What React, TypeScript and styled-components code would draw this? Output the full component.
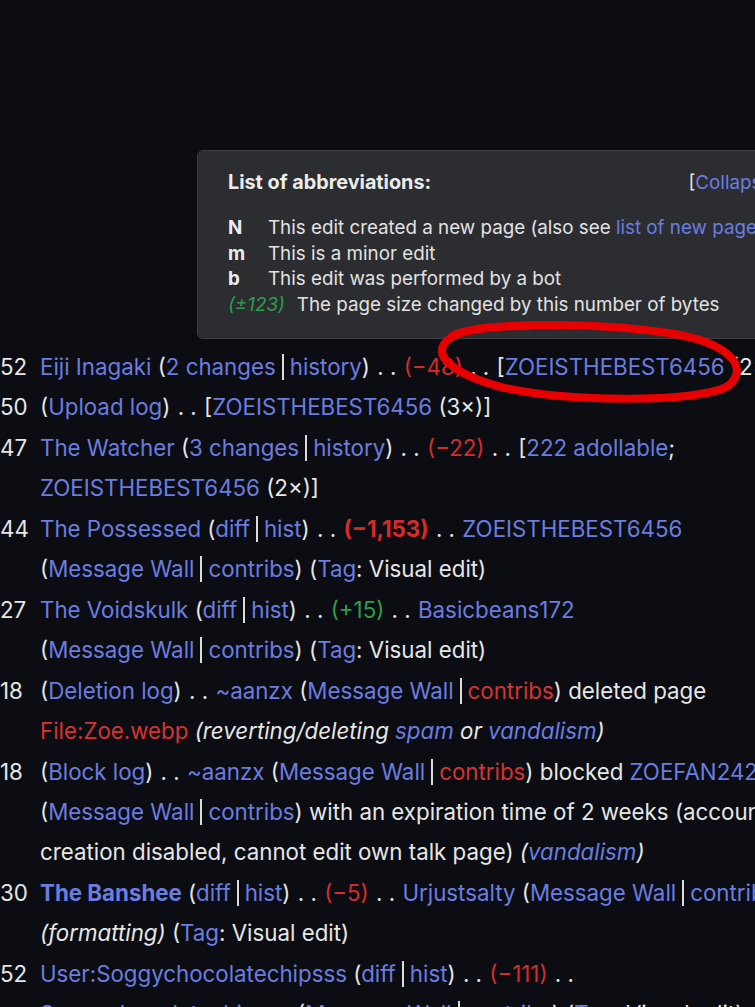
import React from "react";
import styled, { createGlobalStyle } from "styled-components";

const GlobalStyle = createGlobalStyle`
  html, body { margin: 0; padding: 0; background: #0b0d12; overflow: hidden; }
  body { font-family: Inter, "Noto Sans", "DejaVu Sans", sans-serif; color: #e6e6e6; }
  #root { width: 755px; height: 1007px; overflow: hidden; }
`;

const Page = styled.div`
  position: relative;
  width: 755px;
  height: 1007px;
  overflow: hidden;
  padding-top: 150px;
  box-sizing: border-box;
`;

const Legend = styled.div`
  margin-left: 197px;
  width: 613px;
  box-sizing: border-box;
  background: #2b2d31;
  border: 1px solid #3c3e43;
  border-radius: 6px;
  padding: 19px 30px 21px 30px;
  font-size: 18.8px;
`;

const LegendHead = styled.div`
  display: flex;
  justify-content: space-between;
  align-items: baseline;
  line-height: 24px;
  margin-bottom: 20px;
`;

const LegendTitle = styled.span`
  font-weight: 700;
  font-size: 19.8px;
  color: #ececec;
`;

const DefList = styled.dl`
  margin: 0;
  display: flex;
  flex-direction: column;
`;

const DefRow = styled.div`
  display: flex;
  gap: 12px;
  line-height: 25.5px;
  white-space: nowrap;
`;

const Term = styled.dt<{ $size?: boolean }>`
  min-width: 28px;
  font-weight: ${(p) => (p.$size ? 400 : 700)};
  font-style: ${(p) => (p.$size ? "italic" : "normal")};
  color: ${(p) => (p.$size ? "#2d9d4b" : "#ececec")};
`;

const Desc = styled.dd`
  margin: 0;
  color: #e2e2e2;
`;

const Link = styled.a<{ $red?: boolean; $bold?: boolean }>`
  color: ${(p) => (p.$red ? "#d63333" : "#6b7de0")};
  font-weight: ${(p) => (p.$bold ? 700 : 400)};
  text-decoration: none;
`;

const List = styled.ul`
  list-style: none;
  margin: 8px 0 0 0;
  padding: 0;
`;

const Entry = styled.li`
  display: grid;
  grid-template-columns: 40px auto;
  font-size: 22.3px;
  line-height: 40.45px;
  white-space: nowrap;
  color: #e6e6e6;
`;

const Time = styled.span`
  color: #e6e6e6;
`;

const Body = styled.span``;

const Pipe = styled.span`
  display: inline-block;
  width: 2px;
  height: 26px;
  background: #dcdcdc;
  vertical-align: -5px;
  margin: 0 6px 0 6px;
`;

const Size = styled.span<{ $tone: "neg" | "pos"; $big?: boolean }>`
  color: ${(p) => (p.$tone === "neg" ? "#d62b2b" : "#2d9d4b")};
  font-weight: ${(p) => (p.$big ? 700 : 400)};
`;

const Sep = styled.span`
  margin: 0 1px;
`;

const Comment = styled.span`
  font-style: italic;
`;

const Overlay = styled.svg`
  position: absolute;
  left: 0;
  top: 0;
  pointer-events: none;
`;

const Dots = () => <Sep>. .</Sep>;
const P = () => <Pipe />;

const Wall = ({ redContribs }: { redContribs?: boolean }) => (
  <>
    (<Link>Message Wall</Link>
    <P />
    <Link $red={redContribs}>contribs</Link>)
  </>
);

export default function App() {
  return (
    <Page>
      <GlobalStyle />
      <Legend>
        <LegendHead>
          <LegendTitle>List of abbreviations:</LegendTitle>
          <span>
            [<Link>Collapse</Link>]
          </span>
        </LegendHead>
        <DefList>
          <DefRow>
            <Term>N</Term>
            <Desc>
              This edit created a new page (also see <Link>list of new pages</Link>)
            </Desc>
          </DefRow>
          <DefRow>
            <Term>m</Term>
            <Desc>This is a minor edit</Desc>
          </DefRow>
          <DefRow>
            <Term>b</Term>
            <Desc>This edit was performed by a bot</Desc>
          </DefRow>
          <DefRow>
            <Term $size>(±123)</Term>
            <Desc>The page size changed by this number of bytes</Desc>
          </DefRow>
        </DefList>
      </Legend>

      <List>
        <Entry>
          <Time>52</Time>
          <Body>
            <Link>Eiji Inagaki</Link> (<Link>2 changes</Link>
            <P />
            <Link>history</Link>) <Dots /> <Size $tone="neg">(−48)</Size> <Dots /> [
            <Link>ZOEISTHEBEST6456</Link> (2×)]
          </Body>
        </Entry>
        <Entry>
          <Time>50</Time>
          <Body>
            (<Link>Upload log</Link>) <Dots /> [<Link>ZOEISTHEBEST6456</Link> (3×)]
          </Body>
        </Entry>
        <Entry>
          <Time>47</Time>
          <Body>
            <Link>The Watcher</Link> (<Link>3 changes</Link>
            <P />
            <Link>history</Link>) <Dots /> <Size $tone="neg">(−22)</Size> <Dots /> [
            <Link>222 adollable</Link>;
            <br />
            <Link>ZOEISTHEBEST6456</Link> (2×)]
          </Body>
        </Entry>
        <Entry>
          <Time>44</Time>
          <Body>
            <Link>The Possessed</Link> (<Link>diff</Link>
            <P />
            <Link>hist</Link>) <Dots />{" "}
            <Size $tone="neg" $big>
              (−1,153)
            </Size>{" "}
            <Dots /> <Link>ZOEISTHEBEST6456</Link>
            <br />
            <Wall /> (<Link>Tag</Link>: Visual edit)
          </Body>
        </Entry>
        <Entry>
          <Time>27</Time>
          <Body>
            <Link>The Voidskulk</Link> (<Link>diff</Link>
            <P />
            <Link>hist</Link>) <Dots /> <Size $tone="pos">(+15)</Size> <Dots />{" "}
            <Link>Basicbeans172</Link>
            <br />
            <Wall /> (<Link>Tag</Link>: Visual edit)
          </Body>
        </Entry>
        <Entry>
          <Time>18</Time>
          <Body>
            (<Link>Deletion log</Link>) <Dots /> <Link>~aanzx</Link> <Wall redContribs /> deleted page
            <br />
            <Link $red>File:Zoe.webp</Link>{" "}
            <Comment>
              (reverting/deleting <Link>spam</Link> or <Link>vandalism</Link>)
            </Comment>
          </Body>
        </Entry>
        <Entry>
          <Time>18</Time>
          <Body>
            (<Link>Block log</Link>) <Dots /> <Link>~aanzx</Link> <Wall redContribs /> blocked{" "}
            <Link>ZOEFAN2423</Link>
            <br />
            <Wall /> with an expiration time of 2 weeks (account
            <br />
            creation disabled, cannot edit own talk page){" "}
            <Comment>
              (<Link>vandalism</Link>)
            </Comment>
          </Body>
        </Entry>
        <Entry>
          <Time>30</Time>
          <Body>
            <Link $bold>The Banshee</Link> (<Link>diff</Link>
            <P />
            <Link>hist</Link>) <Dots /> <Size $tone="neg">(−5)</Size> <Dots />{" "}
            <Link>Urjustsalty</Link> <Wall />
            <br />
            <Comment>(formatting)</Comment> (<Link>Tag</Link>: Visual edit)
          </Body>
        </Entry>
        <Entry>
          <Time>52</Time>
          <Body>
            <Link>User:Soggychocolatechipsss</Link> (<Link>diff</Link>
            <P />
            <Link>hist</Link>) <Dots /> <Size $tone="neg">(−111)</Size> <Dots />
            <br />
            <Link>Soggychocolatechipsss</Link> <Wall /> (<Link>Tag</Link>: Visual edit)
          </Body>
        </Entry>
      </List>

      <Overlay width="755" height="1007" viewBox="0 0 755 1007">
        <path
          d="M 452 336 C 478 322, 600 321, 680 335 C 730 345, 750 368, 728 386 C 702 402, 575 403, 505 388 C 462 377, 434 360, 444 344 C 452 331, 485 326, 530 326"
          fill="none"
          stroke="#e80000"
          strokeWidth="8"
          strokeLinecap="round"
        />
      </Overlay>
    </Page>
  );
}
